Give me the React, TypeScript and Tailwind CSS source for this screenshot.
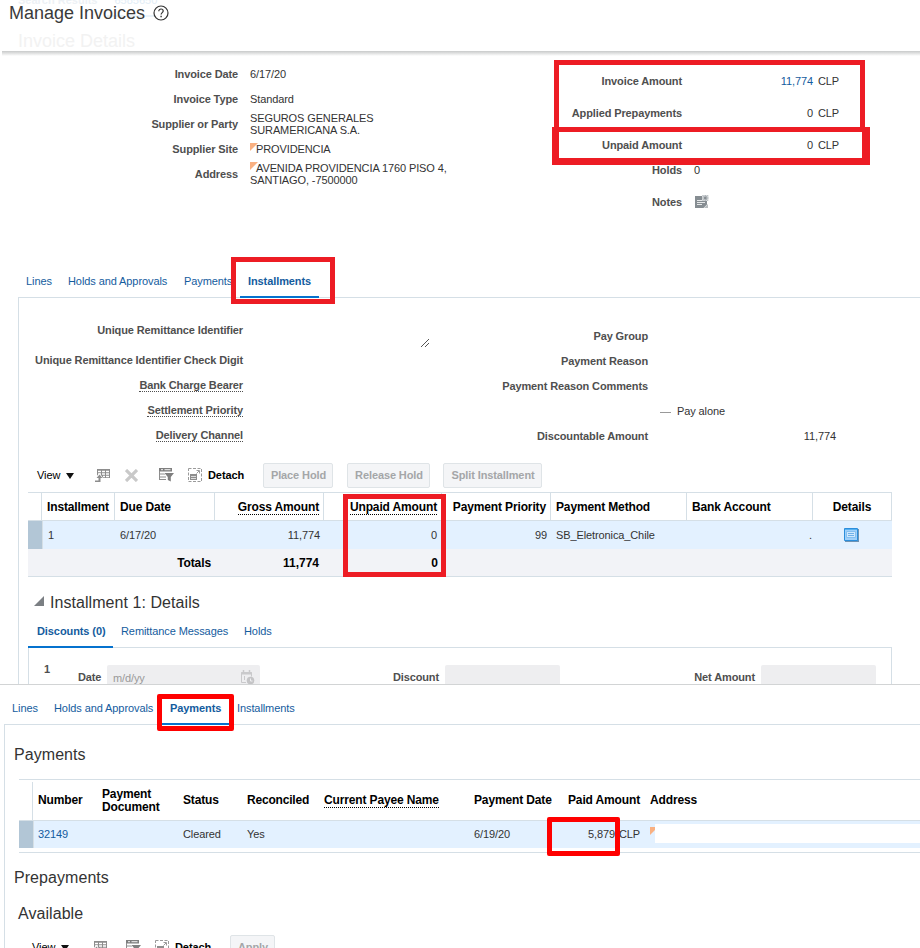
import type { ReactNode } from "react";

const text = "text-[11px] tracking-[-0.11px] text-[#333333]";
const label = "text-[11px] tracking-[-0.12px] font-bold text-[#4f4f4f]";
const link = "text-[11px] tracking-[-0.09px] text-[#145c9e]";

function CornerMark() {
  return (
    <svg className="-mr-px inline-block align-top" width="8" height="8" viewBox="0 0 8 8">
      <path d="M0 0h8L0 8z" fill="#f9b081" />
    </svg>
  );
}

function HelpIcon() {
  return (
    <svg width="16" height="16" viewBox="0 0 16 16" fill="none" stroke="#333" strokeWidth="1.2">
      <circle cx="8" cy="8" r="7" />
      <path d="M5.8 6.2c0-1.4 1-2.2 2.2-2.2s2.2.8 2.2 2c0 1.500-2.100 1.700-2.100 3.400" />
      <path d="M7.400 11.400h1.400" strokeWidth="1.500" />
    </svg>
  );
}

function NotesIcon() {
  return (
    <svg width="14" height="14" viewBox="0 0 14 14">
      <path d="M0 1h8v5h4v3.500L8.500 13H0z" fill="#868d92" />
      <path d="M2 5.500h5M2 7.500h8M2 9.500h5" stroke="#fff" strokeWidth=".8" />
      <path d="M7 0h6.500v6H7z" fill="#d5d9db" />
      <path d="M8 .5l4.500 5M12.500 .5l-4.500 5M10.300 0v6M7.500 3h6" stroke="#9fa5a9" strokeWidth=".8" />
      <circle cx="10.300" cy="3" r="1.300" fill="#868d92" />
      <path d="M13 9v4H9z" fill="#b6bbbe" />
    </svg>
  );
}

function AddRowIcon() {
  return (
    <svg width="15" height="15" viewBox="0 0 15 15">
      <path d="M2 1h13v9H7V8H2z" fill="#8d8d8d" />
      <path d="M3 3.500h3M7 3.500h3M11 3.500h3M3 6h3M7 6h3M11 6h3M8 8.500h2M11 8.500h3" stroke="#fff" strokeWidth="1.500" />
      <path d="M4.500 5L0 10h8z" fill="#fff" />
      <path d="M4.500 6.500L1.500 10h2v2.500H0V14h5.500v-4h2z" fill="#8d8d8d" />
    </svg>
  );
}

function FilterIcon() {
  return (
    <svg width="15" height="14" viewBox="0 0 15 14">
      <path d="M0 0h13v3.500H0z" fill="#7f7f7f" />
      <path d="M.5 3v9M0 6h6M0 9h7M0 11.500h7" stroke="#8d8d8d" />
      <path d="M2 1.700h2M5.500 1.700h6" stroke="#fff" strokeWidth=".9" />
      <path d="M4.500 4.500H16l-4 4.500v5l-3-1.500V9z" fill="#fff" />
      <path d="M5.500 5H15l-3.200 4v4.500l-3-1.500V9z" fill="#7f7f7f" />
    </svg>
  );
}

function DetachIcon() {
  return (
    <svg width="14" height="14" viewBox="0 0 14 14" fill="none" stroke="#9a9a9a">
      <path d="M.5.500h13v13H.500z" strokeDasharray="3 1.500" />
      <path d="M2 6h7v6H2z" fill="#8d8d8d" stroke="none" />
      <path d="M3 8.500h5M3 10.500h5" stroke="#fff" strokeWidth=".7" />
      <path d="M8.500 5.500L11 3M8.500 2.500h3v3" />
    </svg>
  );
}

function DetailsIcon() {
  return (
    <svg width="15" height="14" viewBox="0 0 15 14">
      <path d="M1 1h14v13H1z" fill="#6f93b3" />
      <path d="M.5.500h13v12H.500z" fill="#9fd0fa" stroke="#2c8edb" />
      <path d="M1 1h12v1H1z" fill="#55b1f2" />
      <path d="M2.500 3.500h9v6h-9z" fill="#cfe8fd" stroke="#86c0f0" />
      <path d="M4 5.500h6M4 7.500h6" stroke="#6fb0e8" />
    </svg>
  );
}

function CalendarIcon() {
  return (
    <svg width="15" height="15" viewBox="0 0 15 15" fill="none" stroke="#c9c9cb">
      <path d="M6 12.500H1.500v-10h10v4" />
      <path d="M1 3.500h11" strokeWidth="2" />
      <path d="M3.500 0v3M9.500 0v3" strokeWidth="1.500" />
      <path d="M4.500 6v4" />
      <circle cx="10.500" cy="10.500" r="3.800" fill="#c4c4c6" stroke="none" />
      <path d="M10.500 8.500v2.500h2" stroke="#efeff1" />
    </svg>
  );
}

function Caret() {
  return (
    <svg width="8" height="6" viewBox="0 0 8 6">
      <path d="M0 0h8L4 6z" fill="#111" />
    </svg>
  );
}

function Row({ name, width, className = "h-[25px]", dotted, children }: {
  name: string;
  width: string;
  className?: string;
  dotted?: boolean;
  children?: ReactNode;
}) {
  return (
    <div className={`flex items-center ${className}`}>
      <div className={`shrink-0 text-right leading-[12px] ${label} ${width}`}>
        <span className={dotted ? "border-b border-dotted border-[#4f4f4f]" : ""}>{name}</span>
      </div>
      {children}
    </div>
  );
}

function Amount({ value, currency, blue }: { value: string; currency?: string; blue?: boolean }) {
  return (
    <>
      <span className={`w-[131px] text-right ${blue ? link : text}`}>{value}</span>
      <span className={`ml-[5px] ${text}`}>{currency}</span>
    </>
  );
}

function Button({ name, width }: { name: string; width: string }) {
  return (
    <button
      className={`h-[25px] shrink-0 rounded-[2px] border border-[#dfe4e7] bg-[#f4f5f7] pb-[2px] pl-px text-[11px] font-bold tracking-[-0.11px] whitespace-nowrap text-[#a4a6a8] ${width}`}
    >
      {name}
    </button>
  );
}

const head = "flex h-full items-center border-r border-[#d5dfe6] text-[12px] font-bold tracking-[-0.14px] whitespace-nowrap text-black";
const dottedHead = "border-b border-dotted border-black leading-[13px]";

export default function App() {
  return (
    <div className="relative h-[948px] w-[920px] overflow-hidden bg-white font-['Liberation_Sans',Arial,sans-serif] leading-[12px] whitespace-nowrap">
      {/* Page title */}
      <header className="relative h-[51px] overflow-hidden pl-[9px]">
        <div className="absolute top-[-6px] left-[18px] flex gap-[17px] text-[11px] font-bold text-[#edf1f5]">
          <span>Search Results</span>
          <span className="font-normal text-[#e2edf6]">6585650</span>
        </div>
        <div className="absolute top-[31px] left-[18px] text-[18px] leading-[20px] text-[#f2f2f2]">Invoice Details</div>
        <div className="absolute top-[15px] left-[107px] h-[2px] w-[47px] bg-[#eaf3fa]" />
        <div className="relative flex h-[26px] items-center gap-[8px]">
          <h1 className="w-[136px] text-[18px] leading-[22px] text-[#3a3a3a]">Manage Invoices</h1>
          <HelpIcon />
        </div>
      </header>

      <section className="h-[633px] overflow-hidden">
        <div className="ml-[2px] h-[5px] bg-linear-to-b from-[#c8caca] to-white" />

        {/* Invoice summary */}
        <div className="flex h-[212px]">
          <div className="w-[530px] pt-[5px]">
            <Row name="Invoice Date" width="w-[238px]">
              <span className={`ml-[12px] ${text}`}>6/17/20</span>
            </Row>
            <Row name="Invoice Type" width="w-[238px]">
              <span className={`ml-[12px] ${text}`}>Standard</span>
            </Row>
            <Row name="Supplier or Party" width="w-[238px]">
              <span className={`ml-[12px] ${text}`}>
                SEGUROS GENERALES
                <br />
                SURAMERICANA S.A.
              </span>
            </Row>
            <Row name="Supplier Site" width="w-[238px]">
              <span className={`ml-[12px] ${text}`}><CornerMark /><span className="-ml-px">PROVIDENCIA</span></span>
            </Row>
            <Row name="Address" width="w-[238px]">
              <span className={`ml-[12px] ${text}`}>
                <CornerMark /><span className="-ml-px">AVENIDA PROVIDENCIA 1760 PISO 4,</span>
                <br />
                SANTIAGO, -7500000
              </span>
            </Row>
          </div>
          <div className="pt-[9px]">
            <Row name="Invoice Amount" width="w-[152px]" className="h-[32px]">
              <Amount value="11,774" currency="CLP" blue />
            </Row>
            <Row name="Applied Prepayments" width="w-[152px]" className="h-[32px]">
              <Amount value="0" currency="CLP" />
            </Row>
            <Row name="Unpaid Amount" width="w-[152px]" className="h-[32px]">
              <Amount value="0" currency="CLP" />
            </Row>
            <Row name="Holds" width="w-[152px]" className="h-[18px]">
              <span className={`ml-[12px] ${text}`}>0</span>
            </Row>
            <Row name="Notes" width="w-[152px]" className="mt-[7px] h-[31px]">
              <span className="ml-[13px]"><NotesIcon /></span>
            </Row>
          </div>
        </div>

        {/* Invoice tabs */}
        <nav className={`flex h-[29px] items-start pt-[7px] pl-[26px] ${link}`}>
          <span className="w-[42px]">Lines</span>
          <span className="w-[116px]">Holds and Approvals</span>
          <span className="w-[56px]">Payments</span>
          <span className="h-[23px] w-[79px] border-b-2 border-[#0572ce] pl-[8px] font-bold">Installments</span>
        </nav>

        <div className="ml-[18px] h-[387px] border-t border-l border-[#d5dfe6]">
          <div className="flex h-[164px]">
            <div className="w-[224px] pt-[16px]">
              <Row name="Unique Remittance Identifier" width="w-[224px]" className="h-[32px]" />
              <Row name="Unique Remittance Identifier Check Digit" width="w-[224px]" className="h-[27px]" />
              <Row name="Bank Charge Bearer" width="w-[224px]" className="h-[24px]" dotted />
              <Row name="Settlement Priority" width="w-[224px]" dotted />
              <Row name="Delivery Channel" width="w-[224px]" dotted />
            </div>
            <svg className="mt-[41px] ml-[178px]" width="9" height="8" viewBox="0 0 9 8" stroke="#555">
              <path d="M0 8L8 0M4 8l4-4" />
            </svg>
            <div className="pt-[25px]">
              <Row name="Pay Group" width="w-[218px]" />
              <Row name="Payment Reason" width="w-[218px]" />
              <Row name="Payment Reason Comments" width="w-[218px]" />
              <Row name="" width="w-[218px]">
                <span className="mt-[4px] ml-[12px] h-px w-[11px] bg-[#999]" />
                <span className={`ml-[6px] ${text}`}>Pay alone</span>
              </Row>
              <Row name="Discountable Amount" width="w-[218px]">
                <span className={`w-[188px] text-right ${text}`}>11,774</span>
              </Row>
            </div>
          </div>

          <div className="mt-px flex h-[25px] items-center pl-[18px] text-[11px] tracking-[-0.09px] text-black">
            <span className="-mt-px w-[29px]">View</span>
            <Caret />
            <span className="-mt-px ml-[21px]"><AddRowIcon /></span>
            <svg className="-mt-px ml-[15px]" width="13" height="13" viewBox="0 0 13 13" stroke="#c9c9c9" strokeWidth="3.200">
              <path d="M1 1l11 11M12 1L1 12" />
            </svg>
            <span className="-mt-px ml-[21px]"><FilterIcon /></span>
            <span className="-mt-px ml-[14px]"><DetachIcon /></span>
            <span className="-mt-px ml-[6px] w-[55px] font-bold">Detach</span>
            <Button name="Place Hold" width="w-[70px]" />
            <span className="w-[14px]" />
            <Button name="Release Hold" width="w-[83px]" />
            <span className="w-[13px]" />
            <Button name="Split Installment" width="w-[99px]" />
          </div>

          {/* Installments table */}
          <div className="mt-[4px] ml-[9px] w-[864px] border-b border-[#d5dfe6]">
            <div className="flex h-[29px] border-y border-[#d5dfe6]">
              <div className={`w-[14px] ${head}`} />
              <div className={`w-[73px] pl-[5px] ${head}`}>Installment</div>
              <div className={`w-[100px] pl-[5px] ${head}`}>Due Date</div>
              <div className={`w-[109px] justify-end pr-[4px] ${head}`}><span className={`mt-[2px] ${dottedHead}`}>Gross Amount</span></div>
              <div className={`w-[118px] justify-end pr-[4px] ${head}`}><span className={`mt-[2px] ${dottedHead}`}>Unpaid Amount</span></div>
              <div className={`w-[109px] justify-end pr-[4px] ${head}`}>Payment Priority</div>
              <div className={`w-[136px] pl-[5px] ${head}`}>Payment Method</div>
              <div className={`w-[126px] pl-[5px] ${head}`}>Bank Account</div>
              <div className={`w-[79px] justify-center ${head}`}>Details</div>
            </div>
            <div className={`flex h-[28px] items-center bg-[#e3f1ff] ${text}`}>
              <div className="h-full w-[15px] border-r border-[#d5dfe6] bg-[#b2c6d6]" />
              <div className="w-[72px] pl-[5px]">1</div>
              <div className="w-[100px] pl-[5px]">6/17/20</div>
              <div className="w-[105px] text-right">11,774</div>
              <div className="w-[117px] text-right">0</div>
              <div className="w-[110px] text-right">99</div>
              <div className="w-[136px] pl-[9px]">SB_Eletronica_Chile</div>
              <div className="w-[129px] text-right">.</div>
              <div className="flex w-[79px] justify-center"><DetailsIcon /></div>
            </div>
            <div className="flex h-[27px] items-center bg-[#f2f3f7] text-[12px] font-bold text-black">
              <div className="w-[183px] text-right tracking-[-0.1px]">Totals</div>
              <div className="w-[108px] text-right">11,774</div>
              <div className="w-[119px] text-right">0</div>
            </div>
          </div>

          <div className="flex h-[48px] items-center pl-[15px] text-[16px] leading-[18px] tracking-[0.06px] text-[#333]">
            <svg className="-mt-px" width="10" height="10" viewBox="0 0 10 10">
              <path d="M10 0v10H0z" fill="#7b7f83" />
            </svg>
            <h2 className="mt-[3px] ml-[6px]">Installment 1: Details</h2>
          </div>
          <nav className={`ml-[9px] flex h-[22px] items-start ${link}`}>
            <span className="h-[23px] w-[85px] border-b-2 border-[#0572ce] pl-[9px] font-bold">Discounts (0)</span>
            <span className="ml-[8px] w-[123px]">Remittance Messages</span>
            <span>Holds</span>
          </nav>
          <div className="ml-[9px] flex h-[38px] w-[864px] overflow-hidden border-x border-t border-[#d5dfe6]">
            <span className={`w-[58px] pt-[15px] pl-[15px] ${label}`}>1</span>
            <div className={`-ml-[9px] flex pt-[17px] ${label}`}>
              <span className="w-[23px] pt-[6px] text-right">Date</span>
              <div className="ml-[6px] flex h-[25px] w-[153px] justify-between rounded-t-[2px] bg-[#eeeef0] pt-[5px] pr-[5px] pl-[6px] font-normal text-[#999]">
                <span className="pt-[2px]">m/d/yy</span>
                <CalendarIcon />
              </div>
              <span className="w-[179px] pt-[6px] text-right">Discount</span>
              <div className="ml-[6px] h-[25px] w-[115px] rounded-t-[2px] bg-[#eeeef0]" />
              <span className="w-[195px] pt-[6px] text-right">Net Amount</span>
              <div className="ml-[6px] h-[25px] w-[115px] rounded-t-[2px] bg-[#eeeef0]" />
            </div>
          </div>
        </div>
      </section>

      {/* Payments tab */}
      <section className="border-t border-[#d2d4d5] bg-white">
        <nav className={`flex h-[39px] items-start pt-[17px] pl-[12px] ${link}`}>
          <span className="w-[42px]">Lines</span>
          <span className="w-[108px]">Holds and Approvals</span>
          <span className="h-[23px] w-[67px] border-b-2 border-[#0572ce] pl-[8px] font-bold">Payments</span>
          <span className="ml-[8px]">Installments</span>
        </nav>
        <div className="ml-[4px] h-[240px] border-t border-l border-[#d5dfe6]">
          <h2 className="pt-[21px] pl-[9px] text-[16px] leading-[18px] tracking-[0.06px] text-[#333]">Payments</h2>
          <div className="mt-[15px] ml-[14px] h-[74px] border-y border-[#d5dfe6]">
            <div className="flex h-[41px] items-center border-b border-[#d5dfe6] text-[12px] leading-[13px] font-bold tracking-[-0.14px] text-black">
              <div className="mt-[2px] h-[38px] w-[14px] border-r border-[#d5dfe6]" />
              <div className="w-[69px] pl-[5px]">Number</div>
              <div className="mt-px w-[81px]">Payment<br />Document</div>
              <div className="w-[64px]">Status</div>
              <div className="w-[77px] tracking-[-0.2px]">Reconciled</div>
              <div className="w-[150px]"><span className={dottedHead}>Current Payee Name</span></div>
              <div className="w-[94px]">Payment Date</div>
              <div className="w-[82px]">Paid Amount</div>
              <div>Address</div>
            </div>
            <div className={`flex h-[27px] items-center bg-[#e3f1ff] ${text}`}>
              <div className="h-full w-[15px] border-r border-[#d5dfe6] bg-[#b2c6d6]" />
              <div className={`-mt-[2px] w-[149px] pl-[4px] ${link}`}>32149</div>
              <div className="-mt-[2px] w-[64px]">Cleared</div>
              <div className="-mt-[2px] w-[227px]">Yes</div>
              <div className="-mt-[2px] w-[62px]">6/19/20</div>
              <div className="-mt-[2px] w-[79px] text-right">5,879</div>
              <div className="-mt-[2px] w-[35px] pl-[4px]">CLP</div>
              <div className="mb-[3px] w-[5px] overflow-hidden"><CornerMark /></div>
              <div className="-mt-[3px] h-[19px] flex-1 bg-white" />
            </div>
          </div>
          <h2 className="pt-[16px] pl-[9px] text-[16px] leading-[18px] tracking-[0.06px] text-[#333]">Prepayments</h2>
          <h3 className="pt-[18px] pl-[13px] text-[16px] leading-[18px] tracking-[0.06px] text-[#333]">Available</h3>
          <div className="mt-[12px] flex h-[25px] items-center pl-[27px] text-[11px] tracking-[-0.09px] text-black">
            <span className="-mt-px w-[29px]">View</span>
            <Caret />
            <span className="-mt-px ml-[23px]"><AddRowIcon /></span>
            <span className="-mt-px ml-[19px]"><FilterIcon /></span>
            <span className="-mt-px ml-[14px]"><DetachIcon /></span>
            <span className="-mt-px ml-[6px] w-[55px] font-bold">Detach</span>
            <Button name="Apply" width="w-[45px]" />
          </div>
        </div>
      </section>

      {/* Highlight frames */}
      <div className="absolute top-[60px] left-[554px] h-[72px] w-[311px] border-5 border-[#ed1c24]" />
      <div className="absolute top-[127px] left-[552px] h-[38px] w-[318px] border-t-5 border-r-[8px] border-b-[7px] border-l-[7px] border-[#ed1c24]" />
      <div className="absolute top-[257px] left-[231px] h-[47px] w-[104px] border-5 border-[#ed1c24]" />
      <div className="absolute top-[494px] left-[343px] h-[83px] w-[103px] border-5 border-[#ed1c24]" />
      <div className="absolute top-[694px] left-[157px] h-[37px] w-[77px] rounded-[2px] border-5 border-[#ff0000]" />
      <div className="absolute top-[817px] left-[547px] h-[39px] w-[73px] rounded-[2px] border-5 border-[#ff0000]" />
    </div>
  );
}
